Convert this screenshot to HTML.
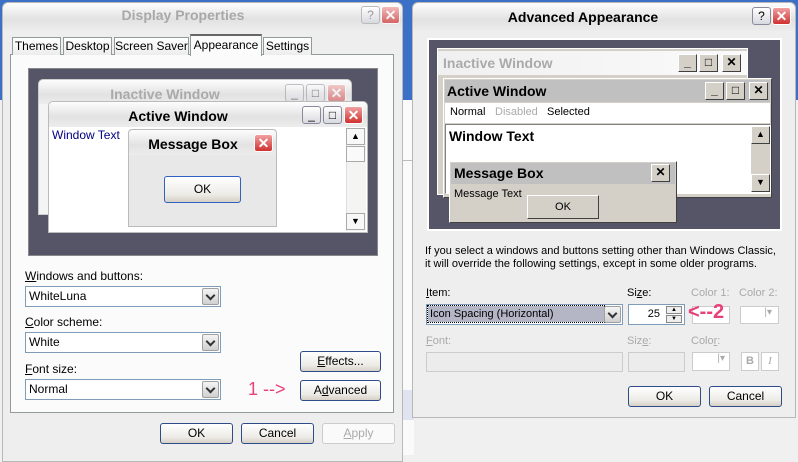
<!DOCTYPE html>
<html><head><meta charset="utf-8"><style>
*{box-sizing:border-box;margin:0;padding:0}
body{width:798px;height:455px;overflow:hidden;position:relative;background:#f0f0f0;font-family:"Liberation Sans",sans-serif;font-size:11px;color:#000}
.a{position:absolute}
.dlg{background:#eeeeee;border:1px solid #b8b8b8;border-radius:6px 6px 0 0}
.tb{background:linear-gradient(#fdfdfd,#e2e2e2 60%,#ececec);}
.btn{position:absolute;border:1px solid #2e4b8a;border-radius:3px;background:linear-gradient(#ffffff,#ecebe6 70%,#d6d0c5);text-align:center;font-size:12px;line-height:18px}
.cb{position:absolute;background:#fff;border:1px solid #7f9db9;font-size:12px;line-height:18px;padding-left:3px}
.cb i{position:absolute;right:1px;top:1px;bottom:1px;width:17px;background:linear-gradient(#f4f4f4,#d0d0d0);border:1px solid #a0a0a0;border-radius:2px}
.cb i:after{content:"";position:absolute;left:4px;top:3px;width:5px;height:5px;border-right:2px solid #333;border-bottom:2px solid #333;transform:rotate(45deg)}
.cbtn{position:absolute;width:19px;height:18px;border:1px solid #8a8a9a;border-radius:3px;background:linear-gradient(#fff,#d8d8e0);font-size:12px;text-align:center;line-height:16px}
.xb{position:absolute;width:19px;height:18px;border:1px solid #fff;border-radius:3px;background:linear-gradient(#f0a0a0,#d03030);color:#fff;font-size:14px;font-weight:bold;text-align:center;line-height:16px}
.cl{position:absolute;width:19px;height:18px;background:#d4d0c8;border:1px solid;border-color:#fff #404040 #404040 #fff;font-size:12px;font-weight:bold;text-align:center;line-height:15px}
.lbl{position:absolute;font-size:12px}
</style></head><body>
<div class="a" style="left:0;top:0;width:798px;height:100px;background:#3c6fc6"></div>
<div class="a" style="left:402px;top:100px;width:12px;height:355px;background:#fafafa"></div>
<div class="a" style="left:402px;top:160px;width:12px;height:1px;background:#bbb"></div>
<div class="a" style="left:402px;top:390px;width:12px;height:30px;background:#dfe4f0"></div>

<div class="a dlg" style="left:2px;top:2px;width:401px;height:460px"></div>
<div class="a tb" style="left:3px;top:3px;width:399px;height:27px;border-radius:6px 6px 0 0"></div>
<div class="a" style="left:3px;top:7px;width:360px;text-align:center;font-size:14px;font-weight:bold;color:#a8a8a8">Display Properties</div>
<div class="cbtn" style="left:361px;top:6px;color:#999;border-color:#bbb">?</div>
<div class="xb" style="left:381px;top:6px;opacity:.7">✕</div>
<div class="a" style="left:10px;top:54px;width:384px;height:359px;background:#fbfbfb;border:1px solid #919b9c"></div>
<div class="a" style="left:12px;top:37px;width:49px;height:18px;border:1px solid #919b9c;border-bottom:0;background:linear-gradient(#fff,#ececec);font-size:12px;text-align:center;line-height:17px">Themes</div>
<div class="a" style="left:63px;top:37px;width:49px;height:18px;border:1px solid #919b9c;border-bottom:0;background:linear-gradient(#fff,#ececec);font-size:12px;text-align:center;line-height:17px">Desktop</div>
<div class="a" style="left:114px;top:37px;width:75px;height:18px;border:1px solid #919b9c;border-bottom:0;background:linear-gradient(#fff,#ececec);font-size:12px;text-align:center;line-height:17px">Screen Saver</div>
<div class="a" style="left:190px;top:34px;width:72px;height:22px;border:1px solid #919b9c;border-top:2px solid #666;border-bottom:0;background:#fbfbfb;font-size:12px;text-align:center;line-height:18px">Appearance</div>
<div class="a" style="left:263px;top:37px;width:49px;height:18px;border:1px solid #919b9c;border-bottom:0;background:linear-gradient(#fff,#ececec);font-size:12px;text-align:center;line-height:17px">Settings</div>
<div class="a" style="left:28px;top:68px;width:350px;height:188px;background:#555567;border:1px solid #888"></div>
<div class="a" style="left:38px;top:79px;width:314px;height:136px;background:#f4f4f4;border:1px solid #ccc;border-radius:5px 5px 0 0"></div>
<div class="a tb" style="left:39px;top:80px;width:312px;height:24px;border-radius:5px 5px 0 0"></div>
<div class="a" style="left:40px;top:86px;width:250px;text-align:center;font-size:14px;font-weight:bold;color:#aaa">Inactive Window</div>
<div class="cbtn" style="left:285px;top:84px;opacity:.5">_</div>
<div class="cbtn" style="left:306px;top:84px;opacity:.5">□</div>
<div class="xb" style="left:327px;top:84px;opacity:.5">✕</div>
<div class="a" style="left:48px;top:101px;width:320px;height:132px;background:#fff;border:1px solid #bbb;border-radius:5px 5px 0 0"></div>
<div class="a tb" style="left:49px;top:102px;width:318px;height:25px;border-radius:5px 5px 0 0"></div>
<div class="a" style="left:49px;top:108px;width:258px;text-align:center;font-size:14px;font-weight:bold">Active Window</div>
<div class="cbtn" style="left:302px;top:106px">_</div>
<div class="cbtn" style="left:323px;top:106px">□</div>
<div class="xb" style="left:344px;top:106px">✕</div>
<div class="a" style="left:52px;top:128px;font-size:12px;color:#000080">Window Text</div>
<div class="a" style="left:346px;top:128px;width:20px;height:103px;background:#f4f4f2;border-left:1px solid #ddd"></div>
<div class="a" style="left:346px;top:128px;width:19px;height:17px;border:1px solid #aaa;background:#f8f8f8;font-size:9px;text-align:center;line-height:15px">▲</div>
<div class="a" style="left:346px;top:146px;width:19px;height:16px;border:1px solid #aaa;background:#fafafa"></div>
<div class="a" style="left:346px;top:213px;width:19px;height:17px;border:1px solid #aaa;background:#f8f8f8;font-size:9px;text-align:center;line-height:15px">▼</div>
<div class="a" style="left:128px;top:129px;width:149px;height:98px;background:#e8e8e8;border:1px solid #bbb;border-radius:4px 4px 0 0"></div>
<div class="a tb" style="left:129px;top:130px;width:147px;height:25px;border-radius:4px 4px 0 0"></div>
<div class="a" style="left:130px;top:136px;width:126px;text-align:center;font-size:14px;font-weight:bold">Message Box</div>
<div class="xb" style="left:254px;top:134px">✕</div>
<div class="btn" style="left:164px;top:176px;width:77px;height:27px;border-color:#3060c0;line-height:25px">OK</div>
<div class="lbl" style="left:25px;top:269px"><u>W</u>indows and buttons:</div>
<div class="cb" style="left:25px;top:286px;width:196px;height:21px">WhiteLuna<i></i></div>
<div class="lbl" style="left:25px;top:315px"><u>C</u>olor scheme:</div>
<div class="cb" style="left:25px;top:332px;width:196px;height:21px">White<i></i></div>
<div class="lbl" style="left:25px;top:362px"><u>F</u>ont size:</div>
<div class="cb" style="left:25px;top:379px;width:196px;height:21px">Normal<i></i></div>
<div class="btn" style="left:300px;top:351px;width:81px;height:21px"><u>E</u>ffects...</div>
<div class="btn" style="left:300px;top:380px;width:81px;height:21px">A<u>d</u>vanced</div>
<div class="a" style="left:248px;top:379px;font-size:18px;color:#e8407a">1 --&gt;</div>
<div class="btn" style="left:160px;top:423px;width:73px;height:21px">OK</div>
<div class="btn" style="left:241px;top:423px;width:73px;height:21px">Cancel</div>
<div class="btn" style="left:322px;top:423px;width:73px;height:21px;border-color:#ccc;color:#aaa;background:#fafafa"><u>A</u>pply</div>

<div class="a dlg" style="left:412px;top:2px;width:384px;height:416px"></div>
<div class="a tb" style="left:413px;top:3px;width:382px;height:28px;border-radius:6px 6px 0 0"></div>
<div class="a" style="left:413px;top:9px;width:340px;text-align:center;font-size:14px;font-weight:bold">Advanced Appearance</div>
<div class="cbtn" style="left:752px;top:7px">?</div>
<div class="xb" style="left:772px;top:7px">✕</div>
<div class="a" style="left:427px;top:38px;width:355px;height:193px;background:#555567;border:2px solid #fff"></div>
<div class="a" style="left:437px;top:48px;width:311px;height:147px;background:#d4d0c8;border:1px solid #fff"></div>
<div class="a" style="left:438px;top:51px;width:309px;height:24px;background:linear-gradient(90deg,#f0f0f0,#fafafa)"></div>
<div class="a" style="left:443px;top:55px;font-size:14px;font-weight:bold;color:#aaa">Inactive Window</div>
<div class="cl" style="left:678px;top:54px">_</div>
<div class="cl" style="left:699px;top:54px">□</div>
<div class="cl" style="left:722px;top:54px">✕</div>
<div class="a" style="left:443px;top:78px;width:329px;height:120px;background:#d4d0c8;border:1px solid;border-color:#fff #404040 #404040 #fff"></div>
<div class="a" style="left:445px;top:80px;width:325px;height:22px;background:#c0c0c0"></div>
<div class="a" style="left:447px;top:83px;font-size:14px;font-weight:bold">Active Window</div>
<div class="cl" style="left:705px;top:82px">_</div>
<div class="cl" style="left:726px;top:82px">□</div>
<div class="cl" style="left:749px;top:82px">✕</div>
<div class="a" style="left:445px;top:103px;width:325px;height:20px;background:#fff"></div>
<div class="a" style="left:450px;top:106px;font-size:11px">Normal</div>
<div class="a" style="left:495px;top:106px;font-size:11px;color:#aaa">Disabled</div>
<div class="a" style="left:547px;top:106px;font-size:11px">Selected</div>
<div class="a" style="left:445px;top:124px;width:326px;height:70px;background:#fff;border:1px solid;border-color:#808080 #fff #fff #808080"></div>
<div class="a" style="left:449px;top:128px;font-size:14px;font-weight:bold">Window Text</div>
<div class="a" style="left:751px;top:126px;width:19px;height:66px;background:#d4d0c8"></div>
<div class="cl" style="left:751px;top:126px;font-size:9px">▲</div>
<div class="cl" style="left:751px;top:174px;font-size:9px">▼</div>
<div class="a" style="left:449px;top:161px;width:228px;height:62px;background:#d4d0c8;border:1px solid;border-color:#fff #404040 #404040 #fff"></div>
<div class="a" style="left:451px;top:163px;width:224px;height:21px;background:#c0c0c0"></div>
<div class="a" style="left:454px;top:165px;font-size:14px;font-weight:bold">Message Box</div>
<div class="cl" style="left:651px;top:164px">✕</div>
<div class="a" style="left:454px;top:188px;font-size:11px">Message Text</div>
<div class="a" style="left:527px;top:195px;width:72px;height:24px;background:#d4d0c8;border:1px solid;border-color:#fff #404040 #404040 #fff;text-align:center;line-height:22px;font-size:11px">OK</div>
<div class="a" style="left:425px;top:245px;font-size:11px;line-height:13px;width:370px">If you select a windows and buttons setting other than Windows Classic,<br>it will override the following settings, except in some older programs.</div>
<div class="lbl" style="left:426px;top:287px;font-size:11px"><u>I</u>tem:</div>
<div class="cb" style="left:426px;top:304px;width:197px;height:21px;font-size:11px"><span style="background:#b4b6c6;display:block;margin:1px 18px 1px -2px;line-height:16px;padding-left:2px;outline:1px dotted #000">Icon Spacing (Horizontal)</span><i></i></div>
<div class="lbl" style="left:627px;top:287px;font-size:11px">Si<u>z</u>e:</div>
<div class="cb" style="left:628px;top:304px;width:57px;height:21px;font-size:11px;text-align:right;padding-right:24px">25</div>
<div class="a" style="left:666px;top:306px;width:16px;height:8px;border:1px solid #888;background:#eee;font-size:6px;text-align:center;line-height:7px">▲</div>
<div class="a" style="left:666px;top:315px;width:16px;height:8px;border:1px solid #888;background:#eee;font-size:6px;text-align:center;line-height:7px">▼</div>
<div class="lbl" style="left:691px;top:287px;font-size:11px;color:#aaa">Color 1:</div>
<div class="lbl" style="left:739px;top:287px;font-size:11px;color:#aaa">Color 2:</div>
<div class="a" style="left:692px;top:306px;width:38px;height:18px;background:#fff;border:1px solid #ccc"></div>
<div class="a" style="left:740px;top:306px;width:39px;height:18px;background:#fff;border:1px solid #ccc;color:#aaa;font-size:10px;text-align:right;padding-right:6px">|▾</div>
<div class="a" style="left:688px;top:301px;font-size:20px;font-weight:bold;color:#e8407a">&lt;--2</div>
<div class="lbl" style="left:426px;top:335px;font-size:11px;color:#aaa"><u>F</u>ont:</div>
<div class="a" style="left:426px;top:352px;width:197px;height:20px;background:#ececec;border:1px solid #ccc"></div>
<div class="lbl" style="left:627px;top:335px;font-size:11px;color:#aaa">Siz<u>e</u>:</div>
<div class="a" style="left:628px;top:352px;width:57px;height:20px;background:#ececec;border:1px solid #ccc"></div>
<div class="lbl" style="left:691px;top:335px;font-size:11px;color:#aaa">Colo<u>r</u>:</div>
<div class="a" style="left:692px;top:352px;width:38px;height:19px;background:#fff;border:1px solid #ccc;color:#aaa;font-size:10px;text-align:right;padding-right:4px">|▾</div>
<div class="a" style="left:741px;top:352px;width:18px;height:19px;background:#fff;border:1px solid #ccc;color:#aaa;font-weight:bold;text-align:center;line-height:17px">B</div>
<div class="a" style="left:761px;top:352px;width:18px;height:19px;background:#fff;border:1px solid #ccc;color:#aaa;font-style:italic;text-align:center;line-height:17px;font-family:'Liberation Serif',serif">I</div>
<div class="btn" style="left:628px;top:386px;width:73px;height:21px">OK</div>
<div class="btn" style="left:709px;top:386px;width:73px;height:21px">Cancel</div>
</body></html>
